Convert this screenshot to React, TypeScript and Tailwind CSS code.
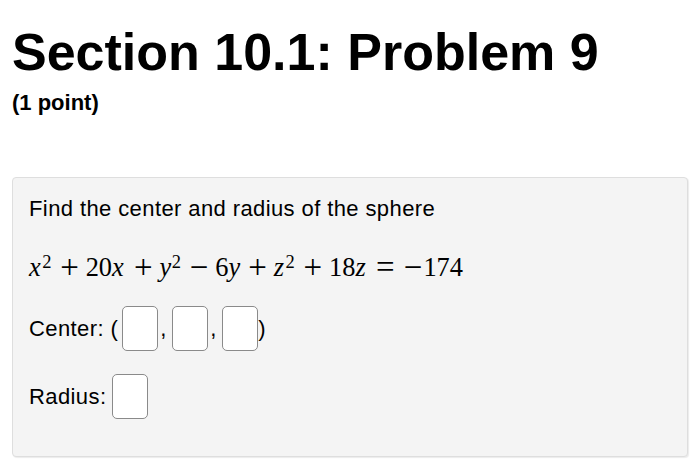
import React from 'react';

function Glyph({ children }: { children: React.ReactNode }) {
  return <span className="relative top-[0.05em] text-[1.25em] leading-[0]">{children}</span>;
}

function Op({ children, rel }: { children: React.ReactNode; rel?: boolean }) {
  return (
    <span className={rel ? 'inline-block w-[1.334em] text-center' : 'inline-block w-[1.222em] text-center'}>
      <Glyph>{children}</Glyph>
    </span>
  );
}

function V({ children, w }: { children: React.ReactNode; w: string }) {
  return <span className={`inline-block italic ${w}`}>{children}</span>;
}

function Sq() {
  return <sup className="text-[0.7em] relative top-[-0.45em] mr-[2px]">2</sup>;
}

function Box({ className = '' }: { className?: string }) {
  return (
    <span className={`inline-block w-[36px] h-[45px] bg-white border border-[#8a8a8a] rounded-[5px] ${className}`} />
  );
}

export default function App() {
  return (
    <div className="w-[700px] h-[460px] bg-white overflow-hidden px-[12px] text-black font-['Liberation_Sans',Arial,sans-serif]">
      <h1 className="pt-[22px] text-[52px] leading-[60px] font-bold">Section 10.1: Problem 9</h1>
      <div className="mt-[8px] text-[22px] leading-[26px] font-bold">(1 point)</div>

      <div className="mt-[61px] h-[280px] bg-[#f4f4f4] border border-[#dedede] rounded-[4px] shadow-[1px_1px_1px_rgba(0,0,0,0.08)] pt-[18px] pl-[16px]">
        <p className="text-[22px] leading-[26px] tracking-[0.4px]">Find the center and radius of the sphere</p>

        <div className="mt-[30px] h-[30px] text-[26.4px] leading-[30px] font-['Liberation_Serif','Times_New_Roman',serif] whitespace-nowrap">
          <V w="w-[0.5em]">x</V><Sq />
          <Op>+</Op>20<V w="w-[0.572em]">x</V>
          <Op>+</Op><V w="w-[0.47em]">y</V><Sq />
          <Op>−</Op>6<V w="w-[0.49em]">y</V>
          <Op>+</Op><V w="w-[0.45em]">z</V><Sq />
          <Op>+</Op>18<V w="w-[0.465em]">z</V>
          <Op rel>=</Op>
          <span className="inline-block w-[0.778em] text-center"><Glyph>−</Glyph></span>174
        </div>

        <div className="mt-[24px] flex items-center text-[22px] leading-[26px] tracking-[0.4px]">
          <span>Center: (</span>
          <Box className="ml-[4px]" />
          <span className="ml-[2px] w-[5px]">,</span>
          <Box className="ml-[7px]" />
          <span className="ml-[2px] w-[5px]">,</span>
          <Box className="ml-[7px]" />
          <span>)</span>
        </div>

        <div className="mt-[23px] flex items-center text-[22px] leading-[26px] tracking-[0.4px]">
          <span>Radius:</span>
          <Box className="ml-[6px]" />
        </div>
      </div>
    </div>
  );
}
